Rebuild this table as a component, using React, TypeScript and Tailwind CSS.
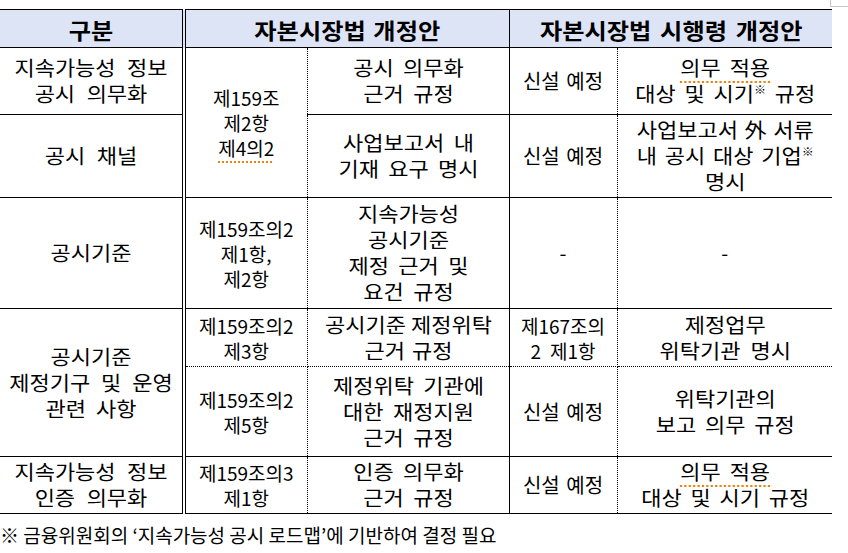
import React from "react";

const U = ({ children }: { children: React.ReactNode }) => (
  <span className="underline decoration-dotted decoration-[#e8830c] decoration-[1.5px] underline-offset-[5px]">
    {children}
  </span>
);

const Ref = () => (
  <span className="align-super text-[11px] font-bold leading-none [word-spacing:0px]">※</span>
);

const cellBase = "p-0 text-center align-middle border-black text-black";
const body = `${cellBase} text-[20px] leading-[26px] font-normal`;
const art = `${cellBase} text-[19px] leading-[25px] font-normal [word-spacing:3px]`;
const head = `${cellBase} text-[22px] leading-[26px] font-bold`;
const R_DBL = "border-r-4 [border-right-style:double]";
const R_DOT = "border-r [border-right-style:dotted]";
const R_SOL = "border-r";
const B_SOL = "border-b";
const B_DOT = "border-b [border-bottom-style:dotted]";

const W1 = "scale-x-[1.1] [word-spacing:6px]";
const W3 = "scale-x-[1.1] [word-spacing:4px]";
const W5 = "scale-x-[1.1] [word-spacing:3.5px]";
const WH = "scale-x-[1.1] [word-spacing:2px]";

export default function App() {
  return (
    <div className="relative w-[848px] h-[553px] bg-white overflow-hidden font-['Noto_Sans_CJK_KR','Noto_Sans_CJK_SC',sans-serif] text-black">
      <div className="absolute left-[830px] top-0 w-[18px] h-[7px] border-l border-b border-[#c8c8c8]" />
      <div className="pt-[9px]">
        <table className="w-[832px] table-fixed border-collapse">
          <colgroup>
            <col className="w-[184px]" />
            <col className="w-[123px]" />
            <col className="w-[202px]" />
            <col className="w-[108px]" />
            <col className="w-[215px]" />
          </colgroup>
          <thead>
            <tr className="h-[38px] bg-[#dde4f5]">
              <th className={`${head} border-t ${B_SOL} ${R_DBL}`}>
                <div className={WH}>구분</div>
              </th>
              <th colSpan={2} className={`${head} border-t ${B_SOL} ${R_SOL}`}>
                <div className={WH}>자본시장법 개정안</div>
              </th>
              <th colSpan={2} className={`${head} border-t ${B_SOL}`}>
                <div className={`${WH} [word-spacing:3px]`}>자본시장법 시행령 개정안</div>
              </th>
            </tr>
          </thead>
          <tbody>
            <tr className="h-[67px]">
              <td className={`${body} ${B_SOL} ${R_DBL}`}>
                <div className={W1}>
                  지속가능성 정보
                  <br />
                  공시 의무화
                </div>
              </td>
              <td rowSpan={2} className={`${art} ${B_SOL} ${R_DOT}`}>
                제159조
                <br />
                제2항
                <br />
                <U>제4의2</U>
              </td>
              <td className={`${body} ${B_SOL} ${R_SOL}`}>
                <div className={W3}>
                  공시 의무화
                  <br />
                  근거 규정
                </div>
              </td>
              <td className={`${body} ${B_SOL} ${R_DOT} [word-spacing:2px]`}>신설 예정</td>
              <td className={`${body} ${B_SOL}`}>
                <div className={W5}>
                  <U>의무 적용</U>
                  <br />
                  대상 및 시기
                  <Ref /> 규정
                </div>
              </td>
            </tr>
            <tr className="h-[83px]">
              <td className={`${body} ${B_SOL} ${R_DBL}`}>
                <div className={W1}>공시 채널</div>
              </td>
              <td className={`${body} ${B_SOL} ${R_SOL}`}>
                <div className={W3}>
                  사업보고서 내
                  <br />
                  기재 요구 명시
                </div>
              </td>
              <td className={`${body} ${B_SOL} ${R_DOT} [word-spacing:2px]`}>신설 예정</td>
              <td className={`${body} ${B_SOL}`}>
                <div className={W5}>
                  <span className="[word-spacing:1.6px]">사업보고서 外 서류</span>
                  <br />
                  <span className="[word-spacing:2.6px]">
                    내 공시 대상 기업
                    <Ref />
                  </span>
                  <br />
                  명시
                </div>
              </td>
            </tr>
            <tr className="h-[111px]">
              <td className={`${body} ${B_SOL} ${R_DBL}`}>
                <div className={W1}>공시기준</div>
              </td>
              <td className={`${art} ${B_SOL} ${R_DOT}`}>
                제159조의2
                <br />
                제1항,
                <br />
                제2항
              </td>
              <td className={`${body} ${B_SOL} ${R_SOL}`}>
                <div className={W3}>
                  지속가능성
                  <br />
                  공시기준
                  <br />
                  제정 근거 및
                  <br />
                  요건 규정
                </div>
              </td>
              <td className={`${body} ${B_SOL} ${R_DOT}`}>-</td>
              <td className={`${body} ${B_SOL}`}>-</td>
            </tr>
            <tr className="h-[58px]">
              <td rowSpan={2} className={`${body} ${B_SOL} ${R_DBL}`}>
                <div className={W1}>
                  공시기준
                  <br />
                  <span className="[word-spacing:5.5px]">제정기구 및 운영</span>
                  <br />
                  <span className="[word-spacing:4.5px]">관련 사항</span>
                </div>
              </td>
              <td className={`${art} ${B_DOT} ${R_DOT}`}>
                제159조의2
                <br />
                제3항
              </td>
              <td className={`${body} ${B_DOT} ${R_SOL}`}>
                <div className={W3}>
                  <span className="[word-spacing:0px]">공시기준 제정위탁</span>
                  <br />
                  <span className="[word-spacing:2px]">근거 규정</span>
                </div>
              </td>
              <td className={`${art} ${B_DOT} ${R_DOT} [word-spacing:4.5px]`}>
                제167조의
                <br />2 제1항
              </td>
              <td className={`${body} ${B_DOT}`}>
                <div className={W5}>
                  제정업무
                  <br />
                  <span className="[word-spacing:4.8px]">위탁기관 명시</span>
                </div>
              </td>
            </tr>
            <tr className="h-[90px]">
              <td className={`${art} ${B_SOL} ${R_DOT}`}>
                제159조의2
                <br />
                제5항
              </td>
              <td className={`${body} ${B_SOL} ${R_SOL}`}>
                <div className={`${W3} [word-spacing:1.5px]`}>
                  제정위탁 기관에
                  <br />
                  대한 재정지원
                  <br />
                  근거 규정
                </div>
              </td>
              <td className={`${body} ${B_SOL} ${R_DOT} [word-spacing:2px]`}>신설 예정</td>
              <td className={`${body} ${B_SOL}`}>
                <div className={`${W5} [word-spacing:2.7px]`}>
                  위탁기관의
                  <br />
                  보고 의무 규정
                </div>
              </td>
            </tr>
            <tr className="h-[57px]">
              <td className={`${body} ${B_SOL} ${R_DBL}`}>
                <div className={W1}>
                  지속가능성 정보
                  <br />
                  인증 의무화
                </div>
              </td>
              <td className={`${art} ${B_SOL} ${R_DOT}`}>
                제159조의3
                <br />
                제1항
              </td>
              <td className={`${body} ${B_SOL} ${R_SOL}`}>
                <div className={W3}>
                  인증 의무화
                  <br />
                  근거 규정
                </div>
              </td>
              <td className={`${body} ${B_SOL} ${R_DOT} [word-spacing:2px]`}>신설 예정</td>
              <td className={`${body} ${B_SOL}`}>
                <div className={W5}>
                  <U>의무 적용</U>
                  <br />
                  대상 및 시기 규정
                </div>
              </td>
            </tr>
          </tbody>
        </table>
        <div className="pt-[10px] text-[19px] leading-[22px] font-normal whitespace-nowrap">
          ※ 금융위원회의 ‘지속가능성 공시 로드맵’에 기반하여 결정 필요
        </div>
      </div>
    </div>
  );
}
